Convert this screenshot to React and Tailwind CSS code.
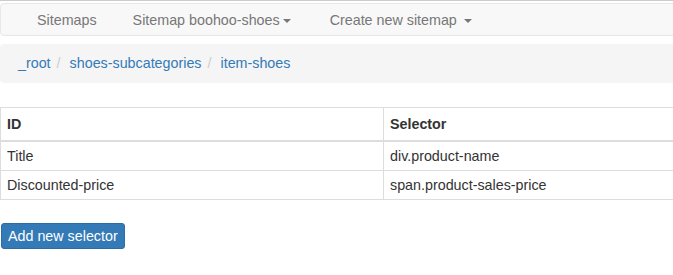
import { useState } from 'react';

const Caret = () => (
    <span className="inline-block ml-[3px] align-middle w-0 h-0 border-t-[4px] border-t-[#777] border-x-[4px] border-x-transparent" />
);

const NavItem = ({ children, caret, className = 'px-[18px]' }) => (
    <a className={`block py-[6px] text-[#777] leading-5 cursor-pointer hover:text-[#333] ${className}`}>
        {children}
        {caret && <Caret />}
    </a>
);

const Crumb = ({ label, last }) => (
    <li className="flex items-center">
        <a className="text-[#337ab7] cursor-pointer hover:underline">{label}</a>
        {!last && <span className="pl-[6px] pr-[9px] text-[#ccc]">/</span>}
    </li>
);

export default function App() {
    const [rows] = useState([
        { id: 'Title', selector: 'div.product-name' },
        { id: 'Discounted-price', selector: 'span.product-sales-price' },
    ]);

    return (
        <div className="w-[673px] h-[275px] overflow-hidden bg-white text-[14.3px] text-[#333] font-['Liberation_Sans',Arial,sans-serif]">
            <div className="pt-[2px] border-t border-t-[#ccc]">
                <nav className="h-[33px] flex items-center pl-[18px] bg-[#f8f8f8] border border-[#e7e7e7] rounded-[4px] mr-[-4px]">
                    <NavItem>Sitemaps</NavItem>
                    <NavItem caret className="pl-[18px] pr-[21px]">Sitemap boohoo-shoes</NavItem>
                    <NavItem caret>Create new sitemap </NavItem>
                </nav>
            </div>

            <ol className="mt-[8px] h-[39px] flex items-center pl-[18px] pr-[15px] pt-[1px] bg-[#f5f5f5] rounded-[4px] mr-[-4px]">
                <Crumb label="_root" />
                <Crumb label="shoes-subcategories" />
                <Crumb label="item-shoes" last />
            </ol>

            <table className="mt-[24px] w-[700px] border-collapse">
                <thead>
                    <tr>
                        <th className="w-[383px] text-left font-bold px-[6px] py-[6px] leading-5 border border-[#ddd] border-b-2">ID</th>
                        <th className="text-left font-bold px-[6px] py-[6px] leading-5 border border-[#ddd] border-b-2">Selector</th>
                    </tr>
                </thead>
                <tbody>
                    {rows.map((r) => (
                        <tr key={r.id}>
                            <td className="px-[6px] py-[4px] leading-5 border border-[#ddd]">{r.id}</td>
                            <td className="px-[6px] py-[4px] leading-5 border border-[#ddd]">{r.selector}</td>
                        </tr>
                    ))}
                </tbody>
            </table>

            <button className="block mt-[23px] ml-[1px] px-[6px] py-[2px] leading-5 text-white bg-[#337ab7] border border-[#2e6da4] rounded-[3px]">
                Add new selector
            </button>
        </div>
    );
}
